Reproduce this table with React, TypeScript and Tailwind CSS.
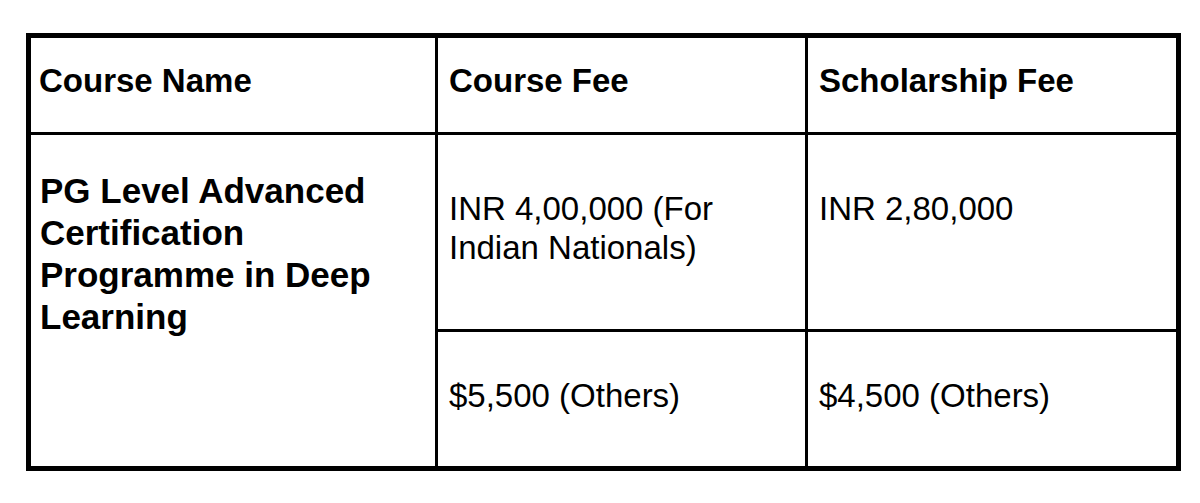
export default function App() {
  return (
    <div className="w-[1200px] h-[503px] bg-white pt-[33px] pl-[26px] font-['Liberation_Sans',Arial,sans-serif] text-black">
      <div className="w-[1155px] h-[438px] border-[5px] border-black bg-black">
        <div className="grid h-full grid-cols-[404px_367px_1fr] grid-rows-[94px_194px_1fr] gap-[3px]">
          {/* Header row */}
          <div className="bg-white pl-[8px] pt-[24px] text-[33px] leading-[38px] font-bold">Course Name</div>
          <div className="bg-white pl-[11px] pt-[24px] text-[33px] leading-[38px] font-bold">Course Fee</div>
          <div className="bg-white pl-[11px] pt-[24px] text-[33px] leading-[38px] font-bold">Scholarship Fee</div>

          {/* Course name spans both fee rows */}
          <div className="row-span-2 bg-white pl-[9px] pr-[8px] pt-[35px] text-[35px] leading-[42px] font-bold">
            PG Level Advanced Certification Programme in Deep Learning
          </div>
          <div className="bg-white pl-[11px] pr-[12px] pt-[54px] text-[33px] leading-[39px]">
            INR 4,00,000 (For Indian Nationals)
          </div>
          <div className="bg-white pl-[11px] pt-[54px] text-[33px] leading-[39px]">INR 2,80,000</div>

          <div className="bg-white pl-[11px] pt-[44px] text-[33px] leading-[39px]">$5,500 (Others)</div>
          <div className="bg-white pl-[11px] pt-[44px] text-[33px] leading-[39px]">$4,500 (Others)</div>
        </div>
      </div>
    </div>
  );
}
